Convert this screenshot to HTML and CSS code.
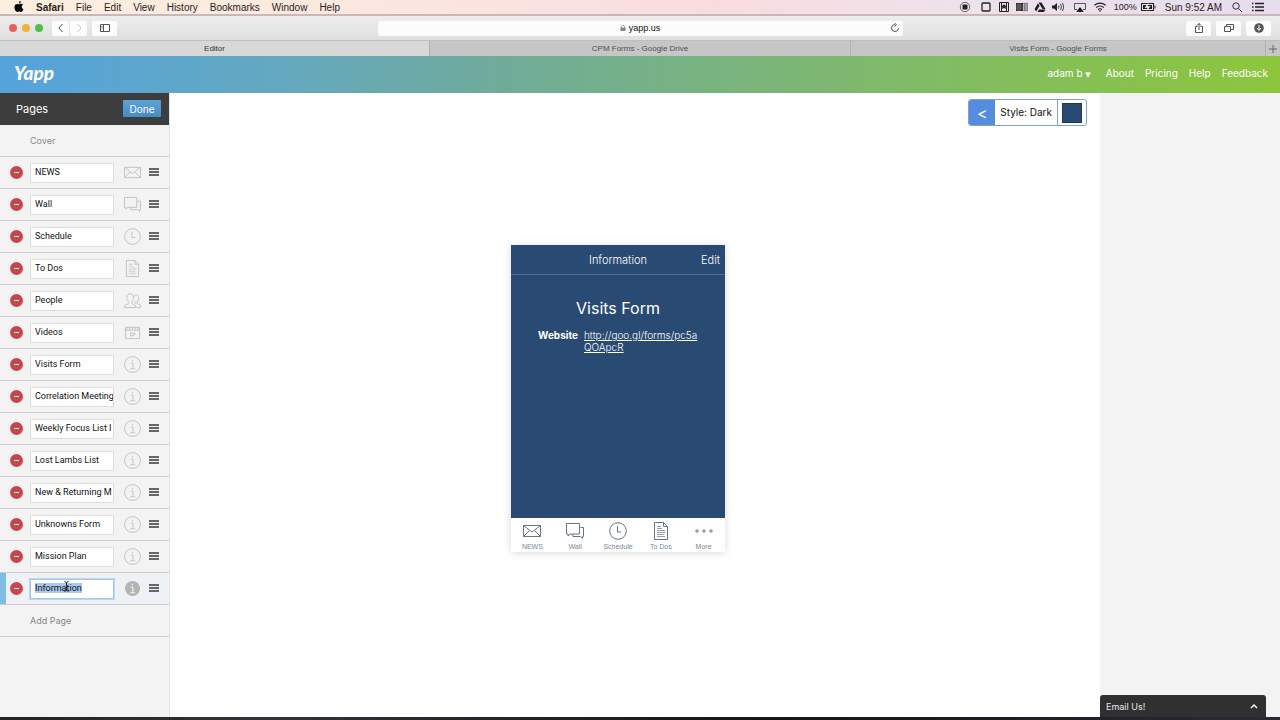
FILE: index.html
```html
<!DOCTYPE html>
<html lang="en">
<head>
    <meta charset="UTF-8">
    <meta name="viewport" content="width=device-width, initial-scale=1.0">
    <title>Editor</title>
    <link rel="stylesheet" href="styles.css">
</head>
<body>
    <svg class="sprite" aria-hidden="true">
        <symbol id="i-mail" viewBox="0 0 18 18"><path d="M.5 3.5h17v11H.5zM.5 3.5l8.500 6.500 8.500-6.500M.5 14.500l6-6M17.500 14.500l-6-6"/></symbol>
        <symbol id="i-wall" viewBox="0 0 18 18"><path d="M.5 1.500h13v10.500H4l-2 2V12H.5zM14.500 5.500h3v9h-1v2l-2-2H7V12"/></symbol>
        <symbol id="i-clock" viewBox="0 0 18 18"><circle cx="9" cy="9" r="8.300"/><path d="M8.500 4v6H12"/></symbol>
        <symbol id="i-doc" viewBox="0 0 18 18"><path d="M2.500.5h9l4 4v13h-13zM11.500.5v4h4"/><path stroke-width=".7" d="M5 4.500h4M5 6.500h5M5 8.500h8M5 10.500h8M5 12.500h7M5 14.500h8"/></symbol>
        <symbol id="i-people" viewBox="0 0 18 18"><path d="M.5 16.500v-2l4-2c1-.5 1-1.500.5-2C3 8.500 3 7 3 5.500c0-5 7-5 7 0 0 1.500 0 3-1.500 5-.5.5-.5 1.500.5 2l3.500 2v2zM10.500 5c2-3.500 5.500-1.500 5 2 0 1.500-.5 2.500-1.500 4-.5.500 0 1.500.5 1.500l3 1.500v2.500h-4M11 12l1.500-.5V9.500"/></symbol>
        <symbol id="i-video" viewBox="0 0 18 18"><path d="M1.500 3.500h15v12h-15zM1.500 6.500h15M2 6l2-2.500M5 6l2-2.500M8 6l2-2.500M11 6l2-2.500M14 6l2-2.500M7 9l5 2-5 2z"/></symbol>
        <symbol id="i-info" viewBox="0 0 18 18"><circle cx="9" cy="9" r="8.400"/><path d="M7 7.500h2.500V13M6.500 13.500h5M9 4v1.500"/></symbol>
        <symbol id="i-info-full" viewBox="0 0 18 18"><circle cx="9" cy="9" r="8" fill="#b4b4b4" stroke="none"/><path stroke="#fff" d="M7 7.500h2.500V13M6.500 13.500h5M9 4v1.500"/></symbol>
        <symbol id="i-more" viewBox="0 0 18 18"><circle cx="2" cy="9" r="1.200"/><circle cx="9" cy="9" r="1.200"/><circle cx="16" cy="9" r="1.200"/></symbol>
    </svg>

    <!-- desktop menu bar -->
    <div class="menubar">
        <svg class="apple" viewBox="0 0 10 12" width="10" height="12"><path d="M6.800 0C6.900 1.300 6 2.500 4.800 2.500 4.700 1.300 5.700.2 6.800 0zM5 3.300c.6 0 1.100-.5 2-.5.8 0 1.500.400 2 1-1.900 1.100-1.500 3.700.4 4.400C8.900 9.700 8 11 7 11c-.8 0-1-.4-1.900-.4S4 11 3.300 11C1.900 11 .4 8.400.4 6.300c0-2.200 1.300-3.400 2.700-3.400.8 0 1.400.4 1.900.4z"/></svg>
        <span class="menu app-name">Safari</span>
        <span class="menu">File</span>
        <span class="menu">Edit</span>
        <span class="menu">View</span>
        <span class="menu">History</span>
        <span class="menu">Bookmarks</span>
        <span class="menu">Window</span>
        <span class="menu">Help</span>
        <div class="status">
            <svg viewBox="0 0 12 12"><circle cx="6" cy="6" r="4.700" fill="none" stroke="#666"/><rect x="3.500" y="3.500" width="5" height="5" rx="1"/></svg>
            <svg class="st-gap" viewBox="0 0 12 12"><rect x="2" y="2" width="8" height="8" rx="1" fill="none" stroke="#222" stroke-width="1.300"/></svg>
            <svg viewBox="0 0 12 12"><path fill="none" stroke="#222" d="M1.500 1.500h9v9h-9zM3.500 2v8M8.500 2v8"/><path d="M6 3l1 1.500h1.500L7.500 6 8 8 6 7 4 8l.5-2-1-1.500H5z"/></svg>
            <svg viewBox="0 0 12 12"><path d="M0 2h7v8H0z"/><path stroke="#555" stroke-width=".6" fill="none" d="M7 2.300h5M7 4h5M7 6h5M7 8h5M7 9.700h5M8.500 2v8M10 2v8M11.700 2v8"/><path stroke="#c8bcc8" stroke-width=".4" d="M0 4h7M0 6h7M0 8h7M2 2v8M4 2v8"/></svg>
            <svg viewBox="0 0 12 12"><path d="M4.500 1.500h3L11.500 8h-3zM4 2.200l1.600 2.500L2.200 10.500.6 8zM5 8.500h6.500L10 11H3.500z"/></svg>
            <svg viewBox="0 0 12 12"><path d="M0 4.500h2l3-2.500v8L2 7.500H0z"/><path fill="none" stroke="#444" d="M6.500 4.500q1 1.500 0 3M8.500 3q2 3 0 6M10.500 2q2.500 4 0 8"/></svg>
            <svg class="st-air" viewBox="0 0 12 12"><path fill="none" stroke="#555" d="M3 8.500H.5v-6h11v6H9"/><path d="M6 6l4 5H2z"/></svg>
            <svg class="st-wifi" viewBox="0 0 12 12"><path fill="none" stroke="#222" stroke-width="1.200" d="M.3 4.300q5.700-4.500 11.400 0M2.200 6.500q3.800-3 7.600 0M4 8.500q2-1.500 4 0"/><path d="M6 11L4.500 9.500h3z"/></svg>
            <span class="percent">100%</span>
            <svg class="battery" viewBox="0 0 15 10" width="15" height="10"><rect x=".5" y="1.500" width="12" height="7" fill="none" stroke="#222"/><path d="M2 3h9v4H2zM13.500 3.500h1v3h-1z"/><path d="M7.500 1L3.500 5.700h3L5.500 9l4-4.700h-3z" fill="#fff"/></svg>
            <span class="date">Sun 9:52 AM</span>
            <svg class="st-search" viewBox="0 0 12 12"><g fill="none" stroke="#333"><circle cx="5" cy="5" r="3.200"/><path d="M7.500 7.500l3.500 3.500"/></g></svg>
            <svg class="st-list" viewBox="0 0 12 12"><path fill="none" stroke="#222" stroke-width="1.300" d="M0 2.500h1.500M3 2.500h9M0 6h1.500M3 6h9M0 9.500h1.500M3 9.500h9"/></svg>
        </div>
    </div>

    <!-- browser toolbar -->
    <div class="toolbar">
        <div class="tb-left">
            <span class="light red"></span>
            <span class="light yellow"></span>
            <span class="light green"></span>
            <div class="tb-nav">
                <button class="tb-btn" aria-label="Back"><svg viewBox="0 0 10 10"><path d="M6.500 1L3 5l3.500 4"/></svg></button>
                <button class="tb-btn dim" aria-label="Forward"><svg viewBox="0 0 10 10"><path d="M3.500 1L7 5 3.500 9"/></svg></button>
            </div>
            <button class="tb-btn wide" aria-label="Sidebar"><svg viewBox="0 0 10 10"><path d="M.5 1.500h9v7h-9zM3.500 1.500v7M1.500 3.500h1M1.500 5h1"/></svg></button>
        </div>
        <div class="address">
            <svg viewBox="0 0 8 8" width="6" height="8"><path d="M2 4V2.500a2 2 0 0 1 4 0V4" fill="none" stroke="#888"/><rect x=".5" y="3.500" width="7" height="4.500" fill="#888"/></svg>
            <span>yapp.us</span>
            <button class="reload" aria-label="Reload"><svg viewBox="0 0 10 10"><path d="M5 1.500a3.500 3.500 0 1 0 3.500 3.500M4.500 0L6.500 1.700 4.500 3.500"/></svg></button>
        </div>
        <div class="tb-right">
            <button class="tb-btn wide" aria-label="Share"><svg viewBox="0 0 10 10"><path d="M3.500 3.500h-2v6h7v-6h-2M5 7V.5M3 2.500l2-2 2 2"/></svg></button>
            <button class="tb-btn wide" aria-label="Tabs"><svg viewBox="0 0 10 10"><path d="M.5 3.500h6v5h-6zM2.500 3.500v-2h7v5h-3"/></svg></button>
            <button class="tb-btn wide" aria-label="Downloads"><svg viewBox="0 0 10 10"><circle cx="5" cy="5" r="4.800" fill="#555" stroke="none"/><path stroke="#fff" d="M5 2v5M3 5l2 2.500L7 5"/></svg></button>
        </div>
    </div>

    <div class="tabs">
        <div class="tab active">Editor</div>
        <div class="tab">CPM Forms - Google Drive</div>
        <div class="tab">Visits Form - Google Forms</div>
        <button class="tab-add" aria-label="New tab"><svg viewBox="0 0 8 8" width="8" height="8"><path d="M4 0v8M0 4h8"/></svg></button>
    </div>

    <header class="site-header">
        <a class="logo" href="#">Yapp</a>
        <nav class="site-nav">
            <a class="user" href="#">adam b <span class="caret">▼</span></a>
            <a href="#">About</a>
            <a href="#">Pricing</a>
            <a href="#">Help</a>
            <a href="#">Feedback</a>
        </nav>
    </header>

    <main class="editor">
        <aside class="sidebar">
            <div class="sidebar-head">
                <h2>Pages</h2>
                <button class="done">Done</button>
            </div>
            <ul class="pages">
                <li class="page plain"><a href="#">Cover</a></li>
                <li class="page"><button class="remove" aria-label="Remove"></button><input type="text" aria-label="Page name" value="NEWS"><svg class="icon"><use href="#i-mail"/></svg><span class="grip"></span></li>
                <li class="page"><button class="remove" aria-label="Remove"></button><input type="text" aria-label="Page name" value="Wall"><svg class="icon"><use href="#i-wall"/></svg><span class="grip"></span></li>
                <li class="page"><button class="remove" aria-label="Remove"></button><input type="text" aria-label="Page name" value="Schedule"><svg class="icon"><use href="#i-clock"/></svg><span class="grip"></span></li>
                <li class="page"><button class="remove" aria-label="Remove"></button><input type="text" aria-label="Page name" value="To Dos"><svg class="icon"><use href="#i-doc"/></svg><span class="grip"></span></li>
                <li class="page"><button class="remove" aria-label="Remove"></button><input type="text" aria-label="Page name" value="People"><svg class="icon"><use href="#i-people"/></svg><span class="grip"></span></li>
                <li class="page"><button class="remove" aria-label="Remove"></button><input type="text" aria-label="Page name" value="Videos"><svg class="icon"><use href="#i-video"/></svg><span class="grip"></span></li>
                <li class="page"><button class="remove" aria-label="Remove"></button><input type="text" aria-label="Page name" value="Visits Form"><svg class="icon"><use href="#i-info"/></svg><span class="grip"></span></li>
                <li class="page"><button class="remove" aria-label="Remove"></button><input type="text" aria-label="Page name" value="Correlation Meeting"><svg class="icon"><use href="#i-info"/></svg><span class="grip"></span></li>
                <li class="page"><button class="remove" aria-label="Remove"></button><input type="text" aria-label="Page name" value="Weekly Focus List I"><svg class="icon"><use href="#i-info"/></svg><span class="grip"></span></li>
                <li class="page"><button class="remove" aria-label="Remove"></button><input type="text" aria-label="Page name" value="Lost Lambs List"><svg class="icon"><use href="#i-info"/></svg><span class="grip"></span></li>
                <li class="page"><button class="remove" aria-label="Remove"></button><input type="text" aria-label="Page name" value="New &amp; Returning M"><svg class="icon"><use href="#i-info"/></svg><span class="grip"></span></li>
                <li class="page"><button class="remove" aria-label="Remove"></button><input type="text" aria-label="Page name" value="Unknowns Form"><svg class="icon"><use href="#i-info"/></svg><span class="grip"></span></li>
                <li class="page"><button class="remove" aria-label="Remove"></button><input type="text" aria-label="Page name" value="Mission Plan"><svg class="icon"><use href="#i-info"/></svg><span class="grip"></span></li>
                <li class="page current"><button class="remove" aria-label="Remove"></button><input type="text" id="current-page" aria-label="Page name" value="Information"><svg class="icon"><use href="#i-info-full"/></svg><span class="grip"></span>
                    <svg class="ibeam" viewBox="0 0 5 11" width="5" height="11"><path d="M.5.5l2 1 2-1M2.500 1.500v8M.5 10.500l2-1 2 1"/></svg>
                </li>
                <li class="page plain"><a href="#">Add Page</a></li>
            </ul>
        </aside>

        <section class="canvas">
            <div class="style-picker">
                <button class="prev" aria-label="Previous style">&lt;</button>
                <span class="style-name">Style: Dark</span>
                <button class="swatch" aria-label="Colour"><span></span></button>
            </div>
            <div class="phone">
                <div class="phone-head">
                    <span class="phone-title">Information</span>
                    <button class="edit">Edit</button>
                </div>
                <div class="phone-body">
                    <h1>Visits Form</h1>
                    <dl>
                        <dt>Website</dt>
                        <dd><a href="#">http://goo.gl/forms/pc5aQOApcR</a></dd>
                    </dl>
                </div>
                <nav class="phone-tabs">
                    <a href="#"><svg class="icon"><use href="#i-mail"/></svg>NEWS</a>
                    <a href="#"><svg class="icon"><use href="#i-wall"/></svg>Wall</a>
                    <a href="#"><svg class="icon"><use href="#i-clock"/></svg>Schedule</a>
                    <a href="#"><svg class="icon"><use href="#i-doc"/></svg>To Dos</a>
                    <a href="#"><svg class="icon"><use href="#i-more"/></svg>More</a>
                </nav>
            </div>
        </section>

        <aside class="side-panel"></aside>
        <button class="email">Email Us! <svg viewBox="0 0 8 6" width="8" height="6"><path d="M1 5l3-3 3 3"/></svg></button>
    </main>
    <div class="desktop-edge"></div>

    <script>
        document.getElementById('current-page').select();
    </script>
</body>
</html>
```

FILE: styles.css
```css
* { box-sizing: border-box; }
body {
    margin: 0;
    height: 100vh;
    display: flex;
    flex-direction: column;
    overflow: hidden;
    font-family: Inter, "Liberation Sans", sans-serif;
    background: #fff;
}
button {
    border: none;
    padding: 0;
    background: none;
    font-family: inherit;
    cursor: pointer;
}
a { color: inherit; text-decoration: none; }
svg { flex: none; }
.sprite { position: absolute; width: 0; height: 0; }

/* menu bar */
.menubar {
    height: 16px;
    flex: none;
    display: flex;
    align-items: center;
    gap: 12px;
    padding: 0 16px 0 14px;
    border-bottom: 2px solid #c9b8b7;
    background: linear-gradient(90deg, #fbf0e0, #fce7e0 30%, #fadcdf 56%, #eee2ec 75%, #e6dcec);
    font: 10px "Liberation Sans", Arial, sans-serif;
    color: #2b2222;
    white-space: nowrap;
}
.app-name { font-weight: bold; }
.status {
    margin-left: auto;
    display: flex;
    align-items: center;
    gap: 6px;
}
.status svg { width: 12px; height: 12px; fill: #222; }
.status .st-gap { margin: 0 0 0 3px; }
.status .st-air { margin: 0 2px 0 4px; }
.status .st-wifi { margin-right: 2px; }
.status .percent { font-size: 9px; margin-right: -2px; }
.status .battery { width: 15px; height: 10px; }
.date { margin: 0 3px; }
.status .st-search { margin-right: 3px; }

/* browser chrome */
.toolbar {
    height: 24px;
    flex: none;
    display: grid;
    grid-template-columns: 1fr 525px 1fr;
    align-items: center;
    padding: 0 9px;
    background: linear-gradient(#ededed, #dfdfdf);
}
.tb-left, .tb-right { display: flex; align-items: center; gap: 5px; }
.tb-right { justify-content: flex-end; }
.light { width: 8px; height: 8px; border-radius: 50%; }
.red { background: #ed5f5b; }
.yellow { background: #f0b23a; }
.green { background: #4fbf45; }
.tb-nav { display: flex; gap: 1px; margin-left: 4px; }
.tb-btn {
    width: 17px;
    height: 15px;
    display: flex;
    align-items: center;
    justify-content: center;
    border-radius: 2px;
    background: #fcfcfc;
}
.tb-btn.wide { width: 25px; }
.tb-btn svg, .reload svg {
    width: 10px;
    height: 10px;
    fill: none;
    stroke: #555;
}
.tb-btn.dim svg { stroke: #ccc; }
.address {
    height: 15px;
    display: flex;
    align-items: center;
    justify-content: center;
    gap: 3px;
    position: relative;
    border-radius: 2px;
    background: #fcfcfc;
    font: 9px "Liberation Sans", Arial, sans-serif;
    color: #111;
}
.reload { position: absolute; right: 3px; top: 2px; display: flex; }
.tabs {
    height: 16px;
    flex: none;
    display: grid;
    grid-template-columns: 430fr 421fr 415fr 14px;
    background: #c6c6c6;
    border-top: 1px solid #bebebe;
    font: 8px/15px "Liberation Sans", Arial, sans-serif;
    color: #505050;
    text-align: center;
}
.tab { border-right: 1px solid #b0b0b0; }
.tab.active { background: #d8d8d8; color: #333; }
.tab-add { display: flex; align-items: center; justify-content: center; }
.tab-add svg { stroke: #666; }

/* site header */
.site-header {
    height: 37px;
    flex: none;
    display: flex;
    align-items: center;
    justify-content: space-between;
    padding: 0 12px 3px 14px;
    background: linear-gradient(90deg, #54a3dc, #64a9c0 22%, #70ab9c 38%, #81bb66 72%, #8dc63c);
    color: #fff;
}
.logo {
    font: italic 900 19px/20px Lato, sans-serif;
}
.site-nav { display: flex; align-items: center; gap: 11px; font-size: 10px; }
.user { margin-right: 4px; }
.caret { font: 7px "DejaVu Sans", sans-serif; }

/* editor */
.editor {
    flex: 1;
    min-height: 0;
    display: flex;
    position: relative;
}
.sidebar {
    width: 170px;
    flex: none;
    background: #f3f3f3;
    border-right: 1px solid #e4e4e4;
}
.sidebar-head {
    height: 32px;
    display: flex;
    align-items: center;
    justify-content: space-between;
    padding: 0 8px 1px 16px;
    background: #3d3d3d;
    color: #fff;
}
.sidebar-head h2 { margin: 0; font-size: 11px; font-weight: 400; }
.done {
    width: 38px;
    height: 17px;
    border-radius: 1px;
    background: linear-gradient(#5ba3d9, #468bc6);
    color: #fff;
    font-size: 10px;
}
.pages { margin: 0; padding: 0; list-style: none; }
.page {
    height: 32px;
    display: flex;
    align-items: center;
    padding: 0 10px;
    position: relative;
    border-bottom: 1px solid #ccc;
}
.page.plain { padding-left: 30px; font-size: 9px; color: #888; }
.remove {
    width: 13px;
    height: 13px;
    flex: none;
    display: flex;
    align-items: center;
    justify-content: center;
    border-radius: 50%;
    background: #cc444e;
}
.remove::before { content: ""; width: 5px; height: 1px; background: #fff; }
.page input {
    width: 84px;
    height: 20px;
    margin: 0 10px 0 7px;
    padding: 0 0 1px 4px;
    border: 1px solid #ddd;
    outline: none;
    background: #fff;
    font: 9px Roboto, sans-serif;
    color: #111;
}
.page .icon { width: 17px; height: 17px; }
.icon { fill: none; stroke: #c0c0c0; stroke-width: 1; }
.grip {
    width: 11px;
    height: 8px;
    margin: 0 0 1px 8px;
    background: repeating-linear-gradient(#666 0 2px, transparent 2px 3px);
}
.page.current {
    background: #eef2f7;
    box-shadow: inset 6px 0 #7fbde2;
}
.page.current input {
    border-color: #a5c8e8;
    box-shadow: 0 0 0 1px #bdd6ee;
}
input::selection { background: #a9c8f0; color: #111; }
.ibeam {
    position: absolute;
    left: 64px;
    top: 8px;
    fill: none;
    stroke: #222;
}

.canvas {
    flex: 1;
    min-width: 0;
    display: flex;
    flex-direction: column;
    align-items: center;
}
.style-picker {
    align-self: flex-end;
    height: 27px;
    display: flex;
    margin: 6px 13px 0 0;
    border: 1px solid #7ca3c6;
    border-radius: 3px;
    overflow: hidden;
    font-size: 10px;
    line-height: 25px;
    color: #111;
}
.prev { width: 26px; background: #568ce0; color: #fff; font-size: 16px; }
.style-name { padding: 0 5px; }
.swatch {
    width: 29px;
    display: flex;
    align-items: center;
    justify-content: center;
    border-left: 1px solid #7ca3c6;
}
.swatch span { width: 20px; height: 20px; background: #294b73; border: 1px solid #1d3859; }

.phone {
    width: 214px;
    margin: 119px 34px 0 0;
    box-shadow: 0 1px 8px rgba(0, 0, 0, 0.15);
    background: #294b73;
    color: #fff;
}
.phone-head {
    height: 30px;
    display: grid;
    grid-template-columns: 1fr auto 1fr;
    align-items: center;
    padding: 0 5px;
    border-bottom: 1px solid #4a7097;
    font-size: 11px;
    font-weight: 300;
}
.phone-title { grid-column: 2; }
.edit { justify-self: end; color: #fff; font-size: 11px; font-weight: 300; }
.phone-body { height: 243px; padding: 22px 27px; }
.phone-body h1 {
    margin: 0 0 10px;
    font-size: 16px;
    line-height: 22px;
    font-weight: 400;
    text-align: center;
}
.phone-body dl {
    display: flex;
    gap: 6px;
    margin: 0 -6px 0 0;
    font-size: 10px;
    line-height: 12px;
}
.phone-body dt { font-weight: 700; }
.phone-body dd {
    flex: 1;
    margin: 0;
    font-weight: 300;
    word-break: break-all;
}
.phone-body dd a { text-decoration: underline; }
.phone-tabs {
    height: 34px;
    display: grid;
    grid-template-columns: repeat(5, 1fr);
    background: #fff;
    color: #7b8794;
    font: 7px/8px "Liberation Sans", Arial, sans-serif;
}
.phone-tabs a {
    display: flex;
    flex-direction: column;
    align-items: center;
    gap: 3px;
    padding-top: 4px;
}
.phone-tabs .icon { width: 18px; height: 18px; stroke: #66758a; }

.side-panel { width: 180px; flex: none; background: #f3f3f3; }
.email {
    position: absolute;
    right: 14px;
    bottom: 0;
    width: 166px;
    height: 22px;
    display: flex;
    align-items: center;
    justify-content: space-between;
    padding: 0 8px 0 6px;
    border-radius: 3px 3px 0 0;
    background: #303030;
    color: #e8e8e8;
    font-size: 9px;
}
.email svg { fill: none; stroke: #fff; stroke-width: 1.5; }
.desktop-edge {
    height: 3px;
    flex: none;
    background: linear-gradient(90deg, #222, #34323a 20%, #15141a 60%, #2b2a33);
}
```
